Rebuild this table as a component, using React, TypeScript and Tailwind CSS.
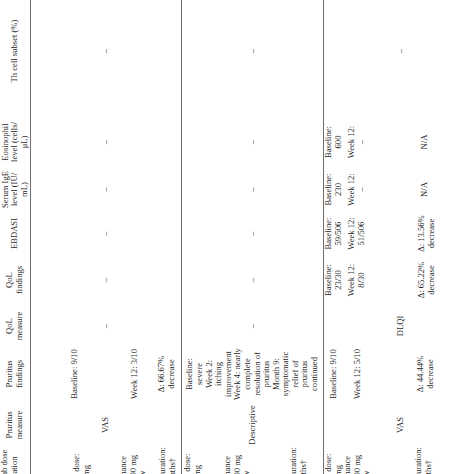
import React from "react";

type Block = { mt?: string; lines: string[] };
type Cell = { text?: string; blocks?: Block[]; top?: string };

const cols =
  "grid grid-cols-[56px_50px_52px_44px_48px_45px_43px_52px_130px]";

const header: string[][] = [
  ["Dupilumab dose", "and duration"],
  ["Pruritus", "measure"],
  ["Pruritus", "findings"],
  ["QoL", "measure"],
  ["QoL", "findings"],
  ["EBDASI"],
  ["Serum IgE", "level (IU/", "mL)"],
  ["Eosinophil", "level (cells/", "μL)"],
  ["Th cell subset (%)"],
];

const row1: Cell[] = [
  {
    blocks: [
      { mt: "mt-[41px]", lines: ["Loading dose:", "600 mg"] },
      { mt: "mt-[28px]", lines: ["Maintenance", "dose: 300 mg", "q2w"] },
      { mt: "mt-[10px]", lines: ["Therapy duration:", "12 months†"] },
    ],
  },
  { text: "VAS" },
  {
    blocks: [
      { mt: "mt-[39px]", lines: ["Baseline: 9/10"] },
      { mt: "mt-[50px]", lines: ["Week 12: 3/10"] },
      { mt: "mt-[18px]", lines: ["Δ: 66.67%", "decrease"] },
    ],
  },
  { text: "–" },
  { text: "–" },
  { text: "–" },
  { text: "–" },
  { text: "–" },
  { text: "–" },
];

const row2: Cell[] = [
  {
    blocks: [
      { mt: "mt-[1px]", lines: ["Loading dose:", "600 mg"] },
      { mt: "mt-[21px]", lines: ["Maintenance", "dose: 300 mg", "q2w"] },
      { mt: "mt-[37px]", lines: ["Therapy duration:", "9 months†"] },
    ],
  },
  { text: "Descriptive" },
  {
    top: "center",
    blocks: [
      {
        lines: [
          "Baseline:",
          "severe",
          "Week 2:",
          "itching",
          "improvement",
          "Week 4: nearly",
          "complete",
          "resolution of",
          "pruritus",
          "Month 9:",
          "symptomatic",
          "relief of",
          "pruritus",
          "continued",
        ],
      },
    ],
  },
  { text: "–" },
  { text: "–" },
  { text: "–" },
  { text: "–" },
  { text: "–" },
  { text: "–" },
];

// baseline / week 12 / change, as stacked pairs in the last row
const triple = (b: string, w: string, d: string[]): Cell => ({
  blocks: [
    { lines: ["Baseline:", b] },
    { mt: "mt-[4px]", lines: ["Week 12:", w] },
    { mt: d.length > 1 ? "mt-[51px]" : "mt-[54px]", lines: d },
  ],
});

const row3: Cell[] = [
  {
    blocks: [
      {
        lines: ["Loading dose:", "600 mg", "Maintenance", "dose: 300 mg", "q2w"],
      },
      { mt: "mt-[42px]", lines: ["Therapy duration:", "3 months†"] },
    ],
  },
  { text: "VAS" },
  {
    blocks: [
      { mt: "mt-[5px]", lines: ["Baseline: 9/10"] },
      { mt: "mt-[14px]", lines: ["Week 12: 5/10"] },
      { mt: "mt-[54px]", lines: ["Δ: 44.44%", "decrease"] },
    ],
  },
  { text: "DLQI" },
  triple("23/30", "8/30", ["Δ: 65.22%", "decrease"]),
  triple("59/506", "51/506", ["Δ: 13.56%", "decrease"]),
  triple("230", "–", ["N/A"]),
  triple("600", "–", ["N/A"]),
  { text: "–" },
];

function TableCell({ cell }: { cell: Cell }) {
  if (cell.text) {
    return (
      <div className="flex items-center justify-center whitespace-nowrap">
        {cell.text}
      </div>
    );
  }
  return (
    <div
      className={`flex flex-col items-center whitespace-nowrap ${
        cell.top === "center" ? "justify-center" : "justify-start"
      }`}
    >
      {cell.blocks?.map((b, i) => (
        <div key={i} className={`flex flex-col items-center ${b.mt ?? ""}`}>
          {b.lines.map((l, j) => (
            <div key={j}>{l}</div>
          ))}
        </div>
      ))}
    </div>
  );
}

export default function App() {
  return (
    <div className="w-[474px] h-[474px] overflow-hidden bg-white">
      {/* the table is printed sideways: header on the left, first column at the bottom */}
      <div
        className="w-[520px] h-[479px] origin-top-left [transform:translateY(506px)_rotate(-90deg)] text-[8.6px] leading-[9.6px] text-[#1f1f1f] text-center"
        style={{ fontFamily: '"Liberation Serif", "Times New Roman", serif' }}
      >
        <div className={`${cols} h-[31px] border-b border-[#6e6e6e]`}>
          {header.map((h, i) => (
            <div
              key={i}
              className={`flex flex-col items-center whitespace-nowrap ${
                i === 0 ? "justify-start" : "justify-center"
              }`}
            >
              {h.map((l, j) => (
                <div key={j}>{l}</div>
              ))}
            </div>
          ))}
        </div>

        <div className={`${cols} h-[151px] border-b border-[#6e6e6e]`}>
          {row1.map((c, i) => (
            <TableCell key={i} cell={c} />
          ))}
        </div>

        <div className={`${cols} h-[142px] border-b border-[#6e6e6e]`}>
          {row2.map((c, i) => (
            <TableCell key={i} cell={c} />
          ))}
        </div>

        <div className={`${cols} h-[154px]`}>
          {row3.map((c, i) => (
            <TableCell key={i} cell={c} />
          ))}
        </div>
      </div>
    </div>
  );
}
